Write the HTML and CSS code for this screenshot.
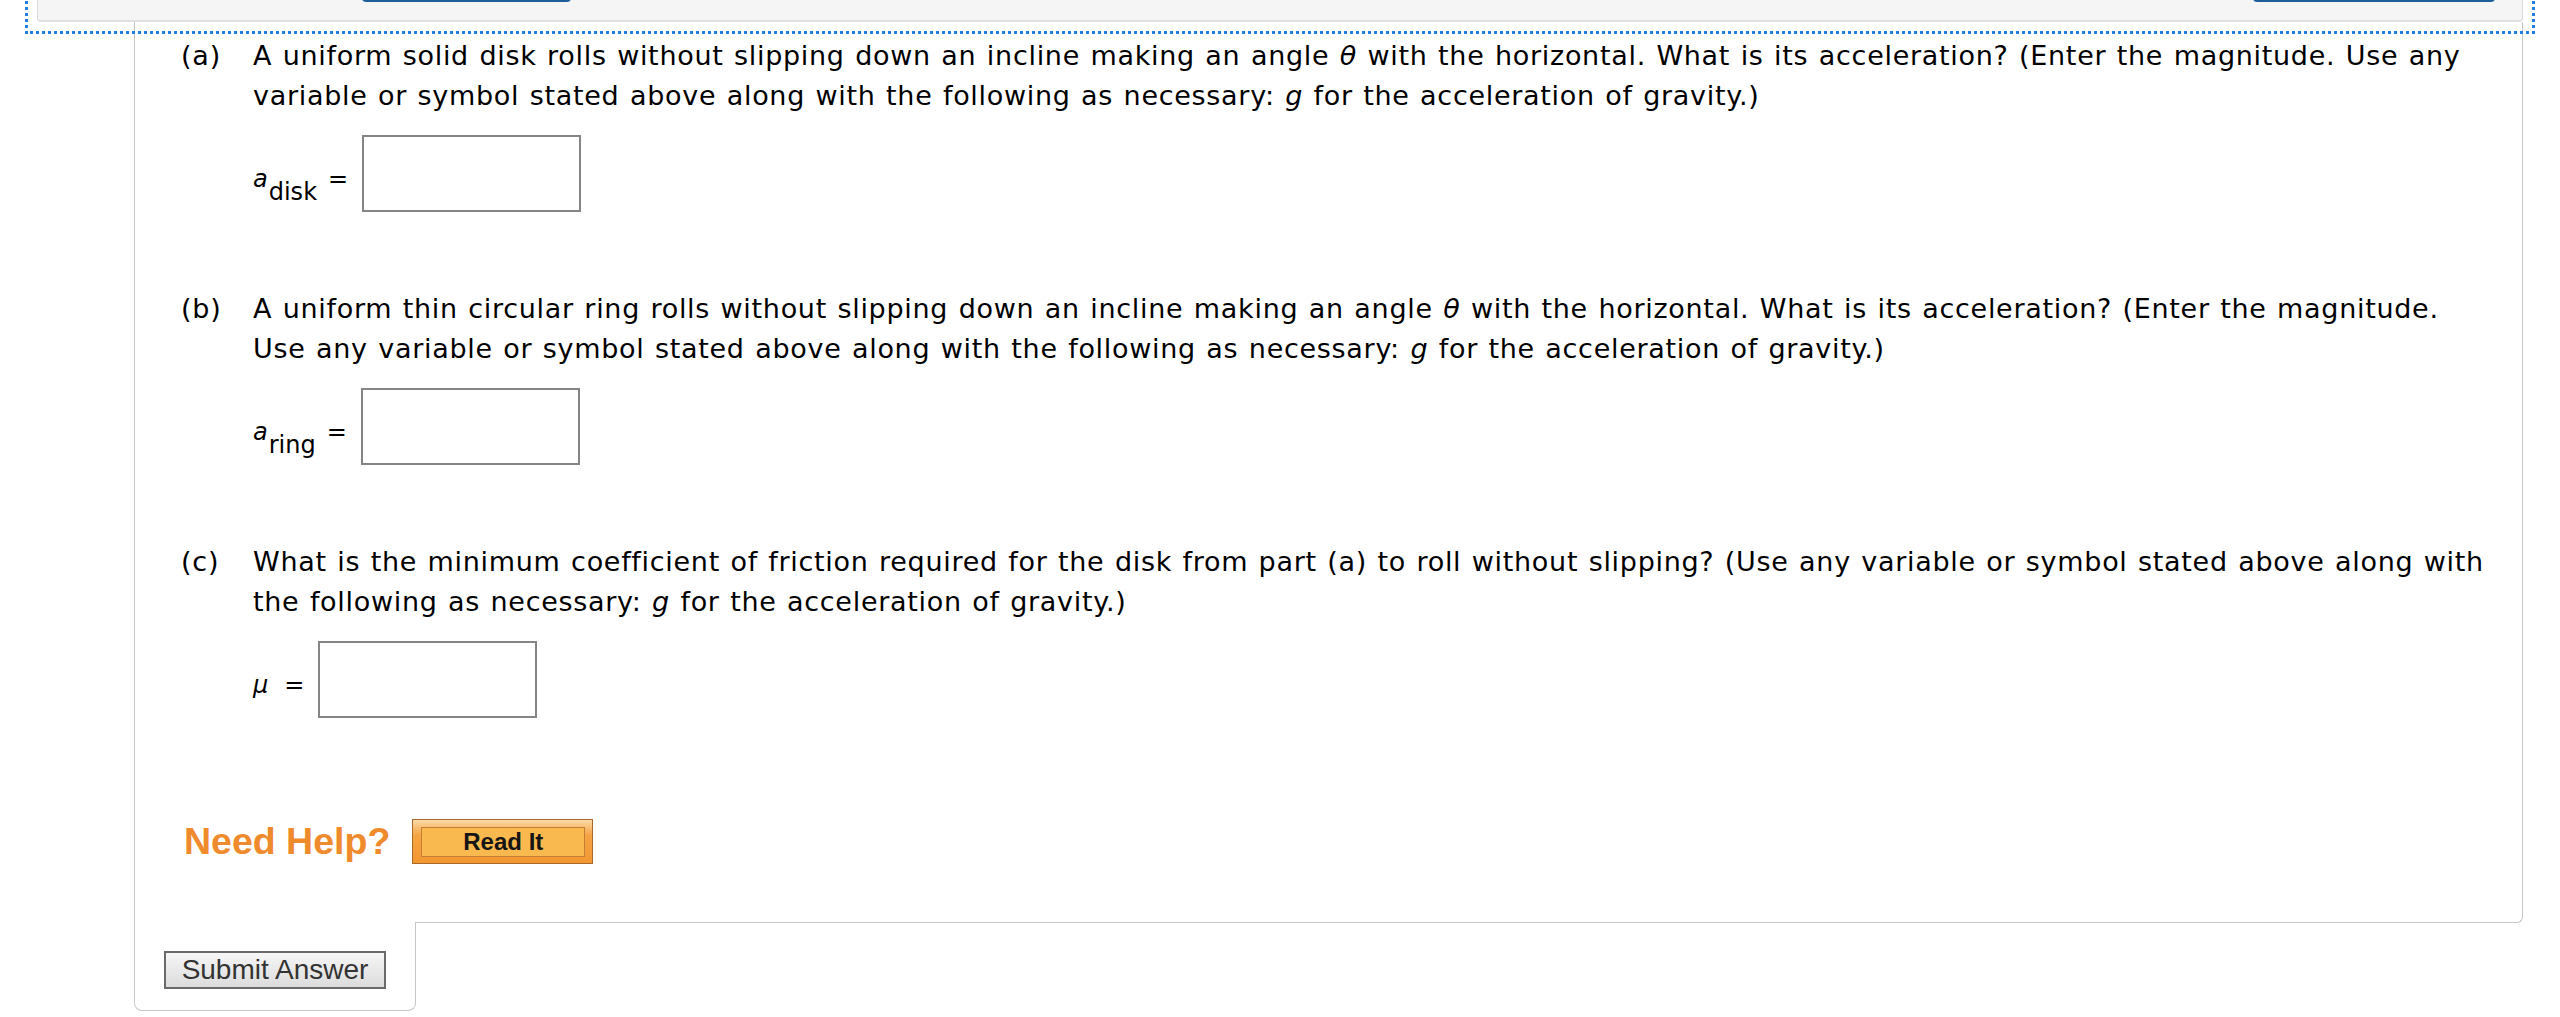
FILE: index.html
```html
<!DOCTYPE html>
<html lang="en">
<head>
<meta charset="utf-8">
<title>Question</title>
<link rel="stylesheet" href="styles.css">
</head>
<body>
<div class="page">
  <div class="toolbar-wrap">
    <div class="toolbar">
      <div class="tb-btn tb-btn-left"></div>
      <div class="tb-btn tb-btn-right"></div>
    </div>
  </div>

  <div class="card">
    <div class="qbody">
      <div class="part">
        <div class="plabel">(a)</div>
        <div class="pcontent">
          <p class="ptext">A uniform solid disk rolls without slipping down an incline making an angle <i class="m">θ</i> with the horizontal. What is its acceleration? (Enter the magnitude. Use any variable or symbol stated above along with the following as necessary: <i class="m">g</i> for the acceleration of gravity.)</p>
          <div class="answer">
            <span class="alabel"><i class="m">a</i><sub class="sub">disk</sub>=</span>
            <span class="ainput"></span>
          </div>
        </div>
      </div>

      <div class="part">
        <div class="plabel">(b)</div>
        <div class="pcontent">
          <p class="ptext">A uniform thin circular ring rolls without slipping down an incline making an angle <i class="m">θ</i> with the horizontal. What is its acceleration? (Enter the magnitude. Use any variable or symbol stated above along with the following as necessary: <i class="m">g</i> for the acceleration of gravity.)</p>
          <div class="answer">
            <span class="alabel"><i class="m">a</i><sub class="sub">ring</sub>=</span>
            <span class="ainput"></span>
          </div>
        </div>
      </div>

      <div class="part">
        <div class="plabel">(c)</div>
        <div class="pcontent">
          <p class="ptext">What is the minimum coefficient of friction required for the disk from part (a) to roll without slipping? (Use any variable or symbol stated above along with the following as necessary: <i class="m">g</i> for the acceleration of gravity.)</p>
          <div class="answer">
            <span class="alabel"><i class="m mu">μ</i>=</span>
            <span class="ainput"></span>
          </div>
        </div>
      </div>

      <div class="help">
        <span class="help-text">Need Help?</span>
        <span class="readit"><span class="readit-inner">Read It</span></span>
      </div>
    </div>
    <div class="tab">
      <button class="submit" type="button">Submit Answer</button>
    </div>
  </div>
</div>
</body>
</html>
```

FILE: styles.css
```css
html, body {
  margin: 0;
  padding: 0;
  background: #ffffff;
}
body {
  overflow: hidden;
  font-family: "DejaVu Sans", Verdana, sans-serif;
  color: #000;
}
.page {
  padding-left: 37px;
  width: 2486px;
}
.toolbar-wrap {
  outline: 3px dotted #1f80e0;
  outline-offset: 9px;
  margin-top: -30px;
}
.toolbar {
  height: 52px;
  box-sizing: border-box;
  background: #f5f5f5;
  border: 1px solid #dadada;
  border-top: none;
  border-bottom: 2px solid #e0e0e0;
  border-radius: 0 0 4px 4px;
  display: flex;
  align-items: flex-start;
  padding-right: 27px;
}
.tb-btn {
  height: 32px;
  background: #1d5f9a;
  border-radius: 0 0 4px 4px;
}
.tb-btn-left {
  width: 209px;
  margin-left: 324px;
}
.tb-btn-right {
  width: 242px;
  margin-left: auto;
}
.card {
  margin-left: 97px;
}
.qbody {
  border: 1px solid #c6c6c6;
  border-top: none;
  border-radius: 0 0 6px 0;
  padding: 14px 32px 58px 46px;
}
.part {
  display: grid;
  grid-template-columns: 72px 1fr;
  font-size: 27px;
  line-height: 40px;
}
.part + .part {
  margin-top: 77px;
}
.plabel {
  white-space: nowrap;
  letter-spacing: 0.8px;
}
.ptext {
  margin: 0;
  letter-spacing: 0.7px;
  word-spacing: 1.2px;
}
.m {
  font-style: italic;
}
.answer {
  display: flex;
  align-items: flex-start;
  margin-top: 19px;
}
.alabel {
  font-size: 24px;
  line-height: 30px;
  margin-top: 29px;
  margin-right: 14px;
  white-space: nowrap;
}
.sub {
  font-size: 24px;
  vertical-align: -13px;
  line-height: 0;
  margin-right: 11px;
  margin-left: 1px;
}
.mu {
  margin-right: 16px;
}
.ainput {
  display: block;
  width: 219px;
  height: 77px;
  box-sizing: border-box;
  border: 2px solid #858585;
  background: #fff;
}
.help {
  display: flex;
  align-items: center;
  margin-top: 101px;
  margin-left: 3px;
  gap: 22px;
}
.help-text {
  font-family: "Liberation Sans", Arial, sans-serif;
  font-weight: bold;
  font-size: 37.5px;
  color: #ef8a2d;
}
.readit {
  display: flex;
  box-sizing: border-box;
  width: 181px;
  height: 45px;
  padding: 7px 7px 6px 8px;
  border: 1px solid #a9692c;
  background: linear-gradient(#fcd9a8 0%, #f5a444 35%, #f29732 100%);
}
.readit-inner {
  flex: 1;
  display: flex;
  align-items: center;
  justify-content: center;
  border: 1px solid #c47f35;
  background: #f9b94f;
  font-family: "Liberation Sans", Arial, sans-serif;
  font-weight: bold;
  font-size: 24px;
  color: #151515;
}
.tab {
  width: 282px;
  box-sizing: border-box;
  margin-top: -1px;
  background: #fff;
  border: 1px solid #c6c6c6;
  border-top: none;
  border-radius: 0 0 8px 8px;
  padding: 29px 0 21px 29px;
}
.submit {
  display: block;
  width: 222px;
  height: 38px;
  margin: 0;
  padding: 0;
  border: 2px solid #6a6a6a;
  border-radius: 0;
  background: linear-gradient(#f6f6f6, #dcdcdc);
  font-family: "Liberation Sans", Arial, sans-serif;
  font-size: 28px;
  color: #333;
}
```
